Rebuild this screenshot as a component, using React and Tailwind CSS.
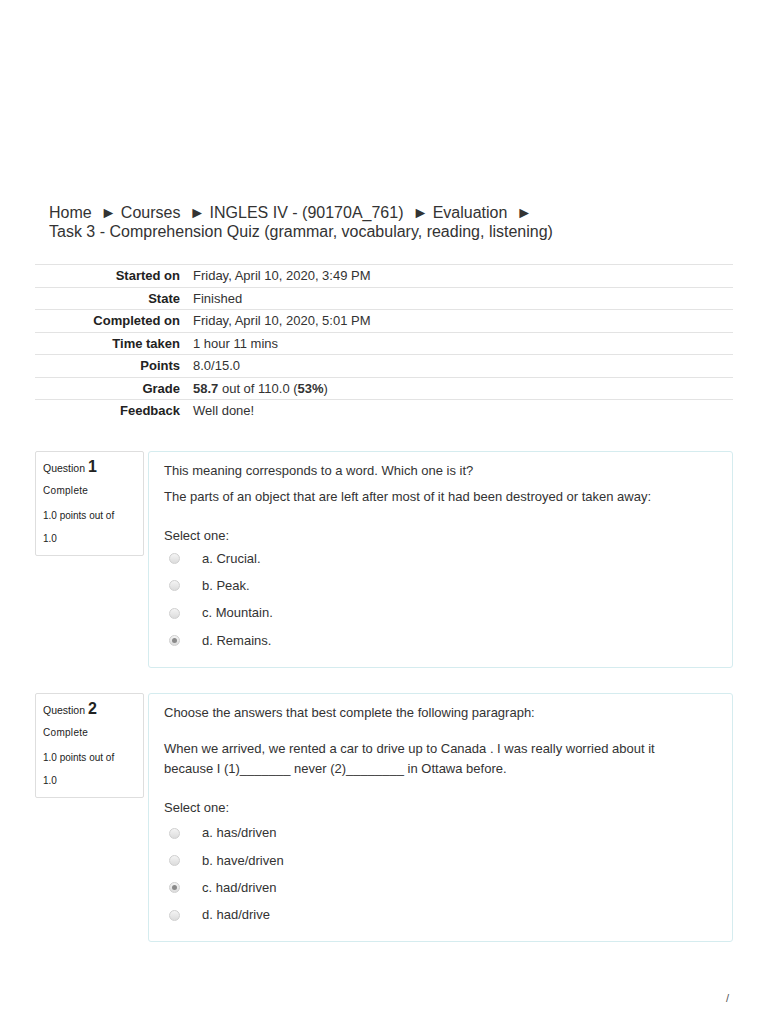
import React from "react";

const summary = [
  { label: "Started on", value: "Friday, April 10, 2020, 3:49 PM" },
  { label: "State", value: "Finished" },
  { label: "Completed on", value: "Friday, April 10, 2020, 5:01 PM" },
  { label: "Time taken", value: "1 hour 11 mins" },
  { label: "Points", value: "8.0/15.0" },
  {
    label: "Grade",
    value: (
      <>
        <b>58.7</b> out of 110.0 (<b>53%</b>)
      </>
    ),
  },
  { label: "Feedback", value: "Well done!" },
];

function Radio({ checked }) {
  return (
    <span className="flex h-[11px] w-[11px] items-center justify-center rounded-full border border-[#cfcfcf] bg-gradient-to-b from-[#f4f4f4] to-[#dcdcdc]">
      {checked && <span className="h-[5px] w-[5px] rounded-full bg-[#8a8a8a]" />}
    </span>
  );
}

function Options({ items, selected, top }) {
  return (
    <div className={`flex flex-col ${top}`}>
      {items.map((opt, i) => (
        <div key={opt} className="flex h-[27.3px] items-center">
          <span className="ml-[5px] w-[33px]">
            <Radio checked={i === selected} />
          </span>
          <span>{opt}</span>
        </div>
      ))}
    </div>
  );
}

function InfoBox({ num }) {
  return (
    <div className="h-[105px] w-[109px] shrink-0 rounded-[2px] border border-[#dedede] px-[7px] pt-[3px] text-[10px] text-[#222]">
      <div className="flex items-baseline gap-[3px]">
        <span className="text-[10.5px]">Question</span>
        <span className="text-[16px] font-bold">{num}</span>
      </div>
      <div className="mt-[4px] tracking-[0.3px]">Complete</div>
      <div className="mt-[10px]">1.0 points out of</div>
      <div className="mt-[8px]">1.0</div>
    </div>
  );
}

export default function App() {
  return (
    <div className="min-h-[1024px] bg-white font-['Liberation_Sans',Arial,sans-serif] text-[#333]">
      <div className="px-[35px] pt-[203px]">
        {/* breadcrumb */}
        <div className="pl-[14px] text-[16px] leading-[19px] text-[#333]">
          <div>Home &nbsp;► Courses &nbsp;► INGLES IV - (90170A_761) &nbsp;► Evaluation &nbsp;►</div>
          <div>Task 3 - Comprehension Quiz (grammar, vocabulary, reading, listening)</div>
        </div>

        {/* attempt summary */}
        <div className="mt-[23px] w-[698px] text-[13px]">
          {summary.map((r) => (
            <div key={r.label} className="flex h-[22.5px] items-center border-t border-[#e3e3e3]">
              <div className="w-[146px] pr-[1px] text-right font-bold text-[#222]">{r.label}</div>
              <div className="pl-[12px]">{r.value}</div>
            </div>
          ))}
        </div>

        <div className="mt-[29px] flex gap-[4px]">
          <InfoBox num="1" />
          <div className="h-[217px] w-[586px] rounded-[3px] border border-[#d5ecef] px-[15px] pt-[9px] text-[13px]">
            <div>This meaning corresponds to a word. Which one is it?</div>
            <div className="mt-[7px]">The parts of an object that are left after most of it had been destroyed or taken away:</div>
            <div className="mt-[19px]">Select one:</div>
            <Options top="mt-0" items={["a. Crucial.", "b. Peak.", "c. Mountain.", "d. Remains."]} selected={3} />
          </div>
        </div>

        <div className="mt-[25px] flex gap-[4px]">
          <InfoBox num="2" />
          <div className="h-[249px] w-[586px] rounded-[3px] border border-[#d5ecef] px-[15px] pt-[9px] text-[13px]">
            <div>Choose the answers that best complete the following paragraph:</div>
            <div className="mt-[17px] leading-[20px]">
              When we arrived, we rented a car to drive up to Canada . I was really worried about it
              <br />
              because I (1)_______ never (2)________ in Ottawa before.
            </div>
            <div className="mt-[19px]">Select one:</div>
            <Options top="mt-[2px]" items={["a. has/driven", "b. have/driven", "c. had/driven", "d. had/drive"]} selected={2} />
          </div>
        </div>

        <div className="mt-[48px] flex justify-end pr-[4px] text-[11px] text-[#555]">/</div>
      </div>
    </div>
  );
}
